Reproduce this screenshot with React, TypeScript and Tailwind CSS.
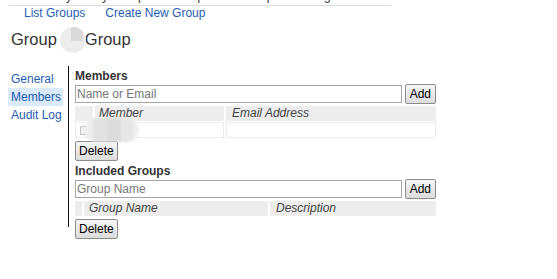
import { useState } from 'react';

const btn =
  'h-[20px] border border-[#8c8c8c] rounded-[2px] bg-gradient-to-b from-[#f6f6f6] to-[#dcdcdc] text-[12px] leading-[18px] text-black';

export default function App() {
  const [tab, setTab] = useState('members');

  const navItems = [
    { id: 'general', label: 'General' },
    { id: 'members', label: 'Members' },
    { id: 'audit', label: 'Audit Log' },
  ];

  return (
    <div className="min-h-screen bg-white font-['Liberation_Sans',Arial,sans-serif] text-[12px] text-[#333]">
      {/* Top nav (cut off) */}
      <div className="ml-[9px] w-[382px] h-[6px] border-b border-[#dcdcdc] overflow-hidden">
        <div className="-mt-[11px] pl-[15px] flex gap-[20px] leading-[14px] text-[#333]">
          <span>Directory</span>
          <span>My Groups</span>
          <span>Group Membership</span>
          <span>Settings</span>
        </div>
      </div>

      {/* Sub nav */}
      <div className="pl-[24px] flex gap-[20px] leading-[14px] text-[#1f5cb3]">
        <a href="#">List Groups</a>
        <a href="#">Create New Group</a>
      </div>

      {/* Title */}
      <h1 className="mt-[10px] pl-[11px] flex items-center h-[19px] text-[16.5px] leading-[19px] text-[#333]">
        <span>Group</span>
        <span className="relative ml-[3px] -mr-[1px] w-[26px] h-[26px] -my-[4px] rounded-full bg-[#ececec] overflow-hidden">
          <span className="absolute top-0 right-[3px] w-[12px] h-[14px] bg-[#dadada]" />
        </span>
        <span>Group</span>
      </h1>

      <div className="mt-[17px] flex">
        {/* Left nav */}
        <div className="w-[68px] pt-[4px]">
          {navItems.map((n) => (
            <div
              key={n.id}
              onClick={() => setTab(n.id)}
              className={`ml-[8px] w-[55px] pl-[3px] h-[18px] leading-[18px] text-[#1f5cb3] cursor-pointer ${
                tab === n.id ? 'bg-[#d9eaf8]' : ''
              }`}
            >
              {n.label}
            </div>
          ))}
        </div>

        {/* Content */}
        <div className="h-[161px] border-l border-[#111] pl-[6px] pt-[3px] w-[368px]">
          <div className="font-bold leading-[14px] text-[#333]">Members</div>
          <div className="mt-[1px] flex items-center gap-[3px]">
            <input
              placeholder="Name or Email"
              className="w-[329px] h-[18px] border border-[#a6a6a6] px-[1px] text-[12px] placeholder:text-[#777] outline-none"
            />
            <button className={`${btn} px-[4px]`}>Add</button>
          </div>

          <div className="mt-[2px] w-[361px]">
            <div className="flex gap-[2px] h-[15px] leading-[15px] italic text-[#444]">
              <div className="w-[18px] bg-[#ededed]" />
              <div className="w-[129px] bg-[#ededed] pl-[4px]">Member</div>
              <div className="flex-1 bg-[#ededed] pl-[6px]">Email Address</div>
            </div>
            <div className="relative mt-[1px] flex gap-[2px] h-[16px]">
              <div className="w-[18px] border border-[#ececec] flex items-center justify-center">
                <span className="w-[9px] h-[9px] border border-[#c4c4c4] bg-[#f2f2f2] rounded-[1px]" />
              </div>
              <div className="w-[129px] border border-[#ececec]" />
              <div className="flex-1 border border-[#ececec]" />
              <div className="absolute left-[10px] -top-[4px] w-[54px] h-[24px] rounded-full bg-[#eeeeee] blur-[1px] flex overflow-hidden">
                <span className="ml-[8px] w-[14px] h-full bg-[#e2e2e2]" />
                <span className="w-[14px] h-full bg-[#dcdcdc]" />
                <span className="w-[12px] h-full bg-[#e6e6e6]" />
              </div>
            </div>
          </div>

          <button className={`${btn} mt-[3px] px-[3px]`}>Delete</button>

          <div className="mt-[3px] font-bold leading-[14px] text-[#333]">Included Groups</div>
          <div className="mt-[1px] flex items-center gap-[3px]">
            <input
              placeholder="Group Name"
              className="w-[329px] h-[18px] border border-[#a6a6a6] px-[1px] text-[12px] placeholder:text-[#777] outline-none"
            />
            <button className={`${btn} px-[4px]`}>Add</button>
          </div>

          <div className="mt-[2px] w-[361px] flex gap-[2px] h-[15px] leading-[15px] italic text-[#444]">
            <div className="w-[7px] bg-[#ededed]" />
            <div className="w-[184px] bg-[#ededed] pl-[5px]">Group Name</div>
            <div className="flex-1 bg-[#ededed] pl-[6px]">Description</div>
          </div>

          <button className={`${btn} mt-[3px] px-[3px]`}>Delete</button>
        </div>
      </div>
    </div>
  );
}
